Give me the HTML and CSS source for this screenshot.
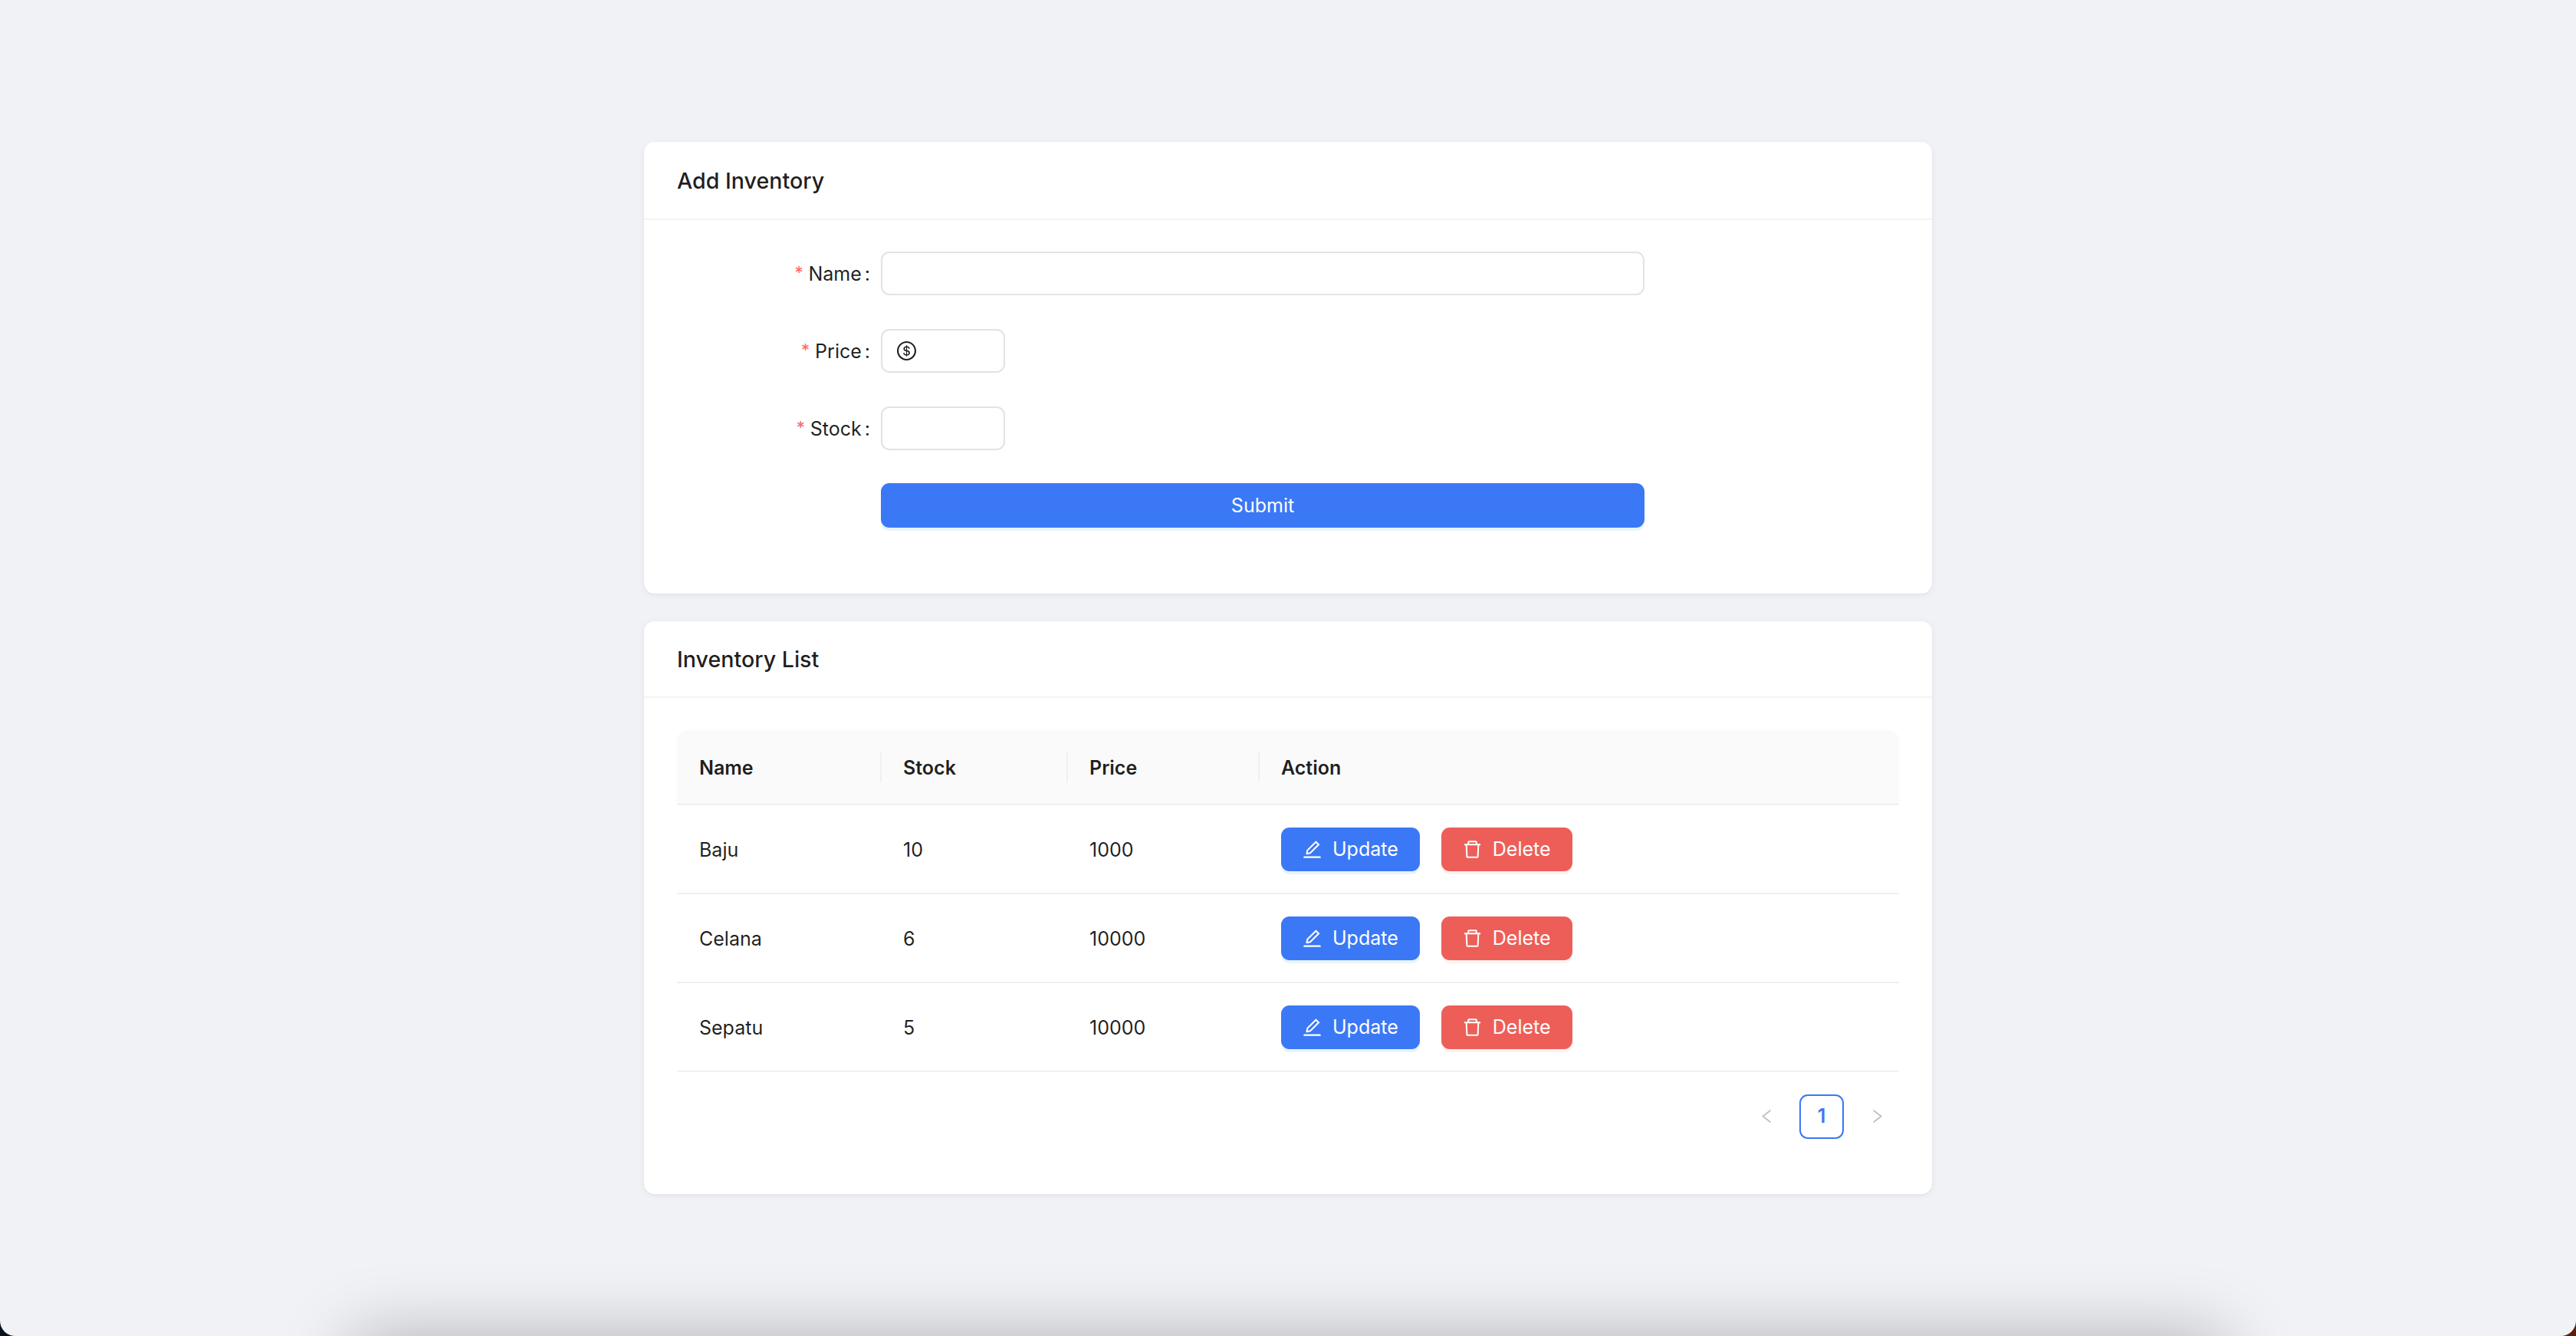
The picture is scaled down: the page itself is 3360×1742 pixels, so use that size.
FILE: index.html
```html
<!DOCTYPE html>
<html lang="en">
<head>
<meta charset="utf-8">
<title>Inventory</title>
<link rel="stylesheet" href="styles.css">
</head>
<body>
<div class="window">
  <main class="page">
    <section class="card">
      <header class="card-head card-head-form">Add Inventory</header>
      <div class="card-body">
        <form class="form">
          <div class="form-row">
            <label class="form-label"><span class="req">*</span>Name<span class="colon">:</span></label>
            <input class="input input-wide" type="text">
          </div>
          <div class="form-row">
            <label class="form-label"><span class="req">*</span>Price<span class="colon">:</span></label>
            <span class="input input-short input-prefixed">
              <svg class="icon" viewBox="64 64 896 896" fill="currentColor"><path d="M512 64C264.6 64 64 264.6 64 512s200.6 448 448 448 448-200.6 448-448S759.4 64 512 64zm0 820c-205.4 0-372-166.6-372-372s166.6-372 372-372 372 166.6 372 372-166.6 372-372 372zm47.7-395.2l-25.4-5.9V348.6c38 5.2 61.5 29 65.5 58.2.5 4 3.9 6.9 7.9 6.9h44.9c4.7 0 8.4-4.1 8-8.8-6.1-62.3-57.4-102.3-125.9-109.2V263c0-4.4-3.6-8-8-8h-28.1c-4.4 0-8 3.6-8 8v33c-70.8 6.9-126.2 46-126.2 119 0 67.6 49.8 100.2 102.1 112.7l24.7 6.3v142.7c-44.2-5.9-69-29.5-74.1-61.3-.6-3.8-4-6.6-7.9-6.6H363c-4.7 0-8.4 4-8 8.7 4.5 55 46.2 105.6 135.2 112.1V761c0 4.4 3.6 8 8 8h28.4c4.4 0 8-3.6 8-8.1l-.2-31.7c78.3-6.9 134.3-48.8 134.3-124-.1-69.4-44.2-100.4-109-116.4zm-68.6-16.2c-5.6-1.6-10.3-3.1-15-5-33.8-12.2-49.5-31.9-49.5-57.3 0-36.3 27.5-57 64.5-61.7v124zM534.3 677V543.3c3.1.9 5.9 1.6 8.8 2.2 47.3 14.4 63.2 34.4 63.2 65.1 0 39.1-29.4 62.6-72 66.4z"/></svg>
            </span>
          </div>
          <div class="form-row">
            <label class="form-label"><span class="req">*</span>Stock<span class="colon">:</span></label>
            <input class="input input-short" type="text">
          </div>
          <div class="form-row form-row-submit">
            <span class="form-label"></span>
            <button class="btn btn-blue btn-submit" type="button"><span>Submit</span></button>
          </div>
        </form>
      </div>
    </section>

    <section class="card">
      <header class="card-head">Inventory List</header>
      <div class="card-body">
        <table class="table">
          <colgroup>
            <col class="col-name"><col class="col-stock"><col class="col-price"><col>
          </colgroup>
          <thead>
            <tr>
              <th>Name</th>
              <th class="has-sep">Stock</th>
              <th class="has-sep">Price</th>
              <th class="has-sep">Action</th>
            </tr>
          </thead>
          <tbody>
            <tr>
              <td>Baju</td><td>10</td><td>1000</td>
              <td><div class="actions">
                <button class="btn btn-blue" type="button"><svg class="icon" viewBox="64 64 896 896" fill="currentColor"><path d="M257.7 752c2 0 4-.2 6-.5L431.9 722c2-.4 3.9-1.3 5.3-2.8l423.9-423.9a9.96 9.96 0 0 0 0-14.1L694.9 114.9c-1.9-1.9-4.4-2.9-7.1-2.9s-5.2 1-7.1 2.9L256.8 538.8c-1.5 1.5-2.4 3.3-2.8 5.3l-29.5 168.2a33.5 33.5 0 0 0 9.4 29.8c6.6 6.4 14.9 9.9 23.8 9.9zm67.4-174.4L687.8 215l73.3 73.3-362.7 362.6-88.9 15.7 15.6-89zM880 836H144c-17.7 0-32 14.3-32 32v36c0 4.4 3.6 8 8 8h784c4.4 0 8-3.6 8-8v-36c0-17.7-14.3-32-32-32z"/></svg><span>Update</span></button>
                <button class="btn btn-red" type="button"><svg class="icon" viewBox="64 64 896 896" fill="currentColor"><path d="M360 184h-8c4.4 0 8-3.6 8-8v8h304v-8c0 4.4 3.6 8 8 8h-8v72h72v-80c0-35.3-28.7-64-64-64H352c-35.3 0-64 28.7-64 64v80h72v-72zm504 72H160c-17.7 0-32 14.3-32 32v32c0 4.4 3.6 8 8 8h60.4l24.7 523c1.6 34.1 29.8 61 63.9 61h454c34.2 0 62.3-26.8 63.9-61l24.7-523H888c4.4 0 8-3.6 8-8v-32c0-17.7-14.3-32-32-32zM731.3 840H292.7l-24.2-512h487l-24.2 512z"/></svg><span>Delete</span></button>
              </div></td>
            </tr>
            <tr>
              <td>Celana</td><td>6</td><td>10000</td>
              <td><div class="actions">
                <button class="btn btn-blue" type="button"><svg class="icon" viewBox="64 64 896 896" fill="currentColor"><path d="M257.7 752c2 0 4-.2 6-.5L431.9 722c2-.4 3.9-1.3 5.3-2.8l423.9-423.9a9.96 9.96 0 0 0 0-14.1L694.9 114.9c-1.9-1.9-4.4-2.9-7.1-2.9s-5.2 1-7.1 2.9L256.8 538.8c-1.5 1.5-2.4 3.3-2.8 5.3l-29.5 168.2a33.5 33.5 0 0 0 9.4 29.8c6.6 6.4 14.9 9.9 23.8 9.9zm67.4-174.4L687.8 215l73.3 73.3-362.7 362.6-88.9 15.7 15.6-89zM880 836H144c-17.7 0-32 14.3-32 32v36c0 4.4 3.6 8 8 8h784c4.4 0 8-3.6 8-8v-36c0-17.7-14.3-32-32-32z"/></svg><span>Update</span></button>
                <button class="btn btn-red" type="button"><svg class="icon" viewBox="64 64 896 896" fill="currentColor"><path d="M360 184h-8c4.4 0 8-3.6 8-8v8h304v-8c0 4.4 3.6 8 8 8h-8v72h72v-80c0-35.3-28.7-64-64-64H352c-35.3 0-64 28.7-64 64v80h72v-72zm504 72H160c-17.7 0-32 14.3-32 32v32c0 4.4 3.6 8 8 8h60.4l24.7 523c1.6 34.1 29.8 61 63.9 61h454c34.2 0 62.3-26.8 63.9-61l24.7-523H888c4.4 0 8-3.6 8-8v-32c0-17.7-14.3-32-32-32zM731.3 840H292.7l-24.2-512h487l-24.2 512z"/></svg><span>Delete</span></button>
              </div></td>
            </tr>
            <tr>
              <td>Sepatu</td><td>5</td><td>10000</td>
              <td><div class="actions">
                <button class="btn btn-blue" type="button"><svg class="icon" viewBox="64 64 896 896" fill="currentColor"><path d="M257.7 752c2 0 4-.2 6-.5L431.9 722c2-.4 3.9-1.3 5.3-2.8l423.9-423.9a9.96 9.96 0 0 0 0-14.1L694.9 114.9c-1.9-1.9-4.4-2.9-7.1-2.9s-5.2 1-7.1 2.9L256.8 538.8c-1.5 1.5-2.4 3.3-2.8 5.3l-29.5 168.2a33.5 33.5 0 0 0 9.4 29.8c6.6 6.4 14.9 9.9 23.8 9.9zm67.4-174.4L687.8 215l73.3 73.3-362.7 362.6-88.9 15.7 15.6-89zM880 836H144c-17.7 0-32 14.3-32 32v36c0 4.4 3.6 8 8 8h784c4.4 0 8-3.6 8-8v-36c0-17.7-14.3-32-32-32z"/></svg><span>Update</span></button>
                <button class="btn btn-red" type="button"><svg class="icon" viewBox="64 64 896 896" fill="currentColor"><path d="M360 184h-8c4.4 0 8-3.6 8-8v8h304v-8c0 4.4 3.6 8 8 8h-8v72h72v-80c0-35.3-28.7-64-64-64H352c-35.3 0-64 28.7-64 64v80h72v-72zm504 72H160c-17.7 0-32 14.3-32 32v32c0 4.4 3.6 8 8 8h60.4l24.7 523c1.6 34.1 29.8 61 63.9 61h454c34.2 0 62.3-26.8 63.9-61l24.7-523H888c4.4 0 8-3.6 8-8v-32c0-17.7-14.3-32-32-32zM731.3 840H292.7l-24.2-512h487l-24.2 512z"/></svg><span>Delete</span></button>
              </div></td>
            </tr>
          </tbody>
        </table>
        <nav class="pagination">
          <span class="page-item page-arrow"><svg class="arrow" viewBox="64 64 896 896" fill="currentColor"><path d="M724 218.3V141c0-6.7-7.7-10.4-12.9-6.3L260.3 486.8a31.86 31.86 0 0 0 0 50.3l450.8 352.1c5.3 4.1 12.9.4 12.9-6.3v-77.3c0-4.9-2.3-9.6-6.1-12.6l-360-281 360-281.1c3.8-3 6.1-7.7 6.1-12.6z"/></svg></span>
          <span class="page-item page-current">1</span>
          <span class="page-item page-arrow"><svg class="arrow" viewBox="64 64 896 896" fill="currentColor"><path d="M765.7 486.8L314.9 134.7A7.97 7.97 0 0 0 302 141v77.3c0 4.9 2.3 9.6 6.1 12.6l360 281.1-360 281.1c-3.9 3-6.1 7.7-6.1 12.6V883c0 6.7 7.7 10.4 12.9 6.3l450.8-352.1a31.96 31.96 0 0 0 0-50.4z"/></svg></span>
        </nav>
      </div>
    </section>
  </main>
  <div class="dock-shadow"></div>
</div>
</body>
</html>
```

FILE: styles.css
```css
* { box-sizing: border-box; }

html {
  margin: 0;
  height: 100%;
  background: linear-gradient(90deg, #06121c 0 50%, #5c1e0c 50% 100%);
}

body {
  margin: 0;
  font-family: "Inter", "Liberation Sans", sans-serif;
  font-size: 25px;
  line-height: 1.5714;
  color: rgba(0, 0, 0, 0.88);
}

.window {
  position: relative;
  width: 3360px;
  height: 1742px;
  overflow: hidden;
  background: #f0f2f6;
  border-radius: 0 0 20px 20px;
}

.page {
  display: flex;
  flex-direction: column;
  align-items: center;
  gap: 36px;
  padding-top: 185px;
}

.card {
  width: 1680px;
  background: #fff;
  border-radius: 14px;
  box-shadow: 0 2px 4px rgba(0, 0, 0, 0.02), 0 2px 10px 2px rgba(0, 0, 0, 0.03), 0 1px 3px rgba(0, 0, 0, 0.03);
}

.card-head {
  display: flex;
  align-items: center;
  height: 100px;
  padding: 2px 43px 0;
  font-size: 28.6px;
  font-weight: 500;
  border-bottom: 2px solid #f3f3f3;
}

.card-head-form { height: 102px; }

.card-body { padding: 43px; }

/* form */
.form {
  display: flex;
  flex-direction: column;
  gap: 44px;
  margin-top: -2px;
  padding-bottom: 43px;
}

.form-row { display: flex; align-items: center; }
.form-row-submit { margin-top: -1px; }

.form-label {
  display: flex;
  justify-content: flex-end;
  align-items: center;
  flex: 0 0 266px;
  padding-top: 2px;
}

.req {
  margin: -6px 7px 0 0;
  color: #ff6464;
  font-size: 22px;
  line-height: 1;
}

.colon { margin: 0 14px 0 4px; }

.input {
  display: block;
  height: 57px;
  padding: 0 19px;
  background: #fff;
  border: 2px solid #e3e3e3;
  border-radius: 11px;
  font: inherit;
  outline: none;
}

.input-wide { width: 996px; }
.input-short { width: 162px; }
.input-prefixed { display: flex; align-items: center; }

.icon { width: 25px; height: 25px; flex: none; }

/* buttons */
.btn {
  display: inline-flex;
  align-items: center;
  justify-content: center;
  gap: 14px;
  height: 57px;
  padding: 0 26px;
  border: 2px solid transparent;
  border-radius: 11px;
  color: #fff;
  font: inherit;
  cursor: pointer;
}

.btn span { padding-top: 2px; }

.btn-blue { background: #3b78f6; box-shadow: 0 4px 0 rgba(5, 145, 255, 0.1); }
.btn-red { background: #ee5e58; box-shadow: 0 4px 0 rgba(255, 38, 5, 0.06); }
.btn-submit { width: 996px; height: 58px; }

/* table */
.table {
  width: 100%;
  margin-top: -1px;
  border-collapse: separate;
  border-spacing: 0;
  table-layout: fixed;
}

.col-name { width: 266px; }
.col-stock { width: 243px; }
.col-price { width: 250px; }

.table th,
.table td {
  padding: 3px 29px 0;
  text-align: left;
}

.table th {
  position: relative;
  height: 98px;
  background: #fafafa;
  font-weight: 600;
  border-bottom: 2px solid #f0f0f0;
}

.table th:first-child { border-top-left-radius: 14px; }
.table th:last-child { border-top-right-radius: 14px; }

.has-sep::before {
  content: "";
  position: absolute;
  left: -1px;
  top: 50%;
  width: 2px;
  height: 40px;
  transform: translateY(-50%);
  background: #f0f0f0;
}

.table td {
  height: 116px;
  border-bottom: 2px solid #f0f0f0;
}

.table td:last-child { padding-top: 0; }

.actions { display: flex; gap: 28px; }

/* pagination */
.pagination {
  display: flex;
  justify-content: flex-end;
  gap: 14px;
  margin-top: 29px;
  padding-bottom: 29px;
}

.page-item {
  display: flex;
  align-items: center;
  justify-content: center;
  width: 58px;
  height: 58px;
  border-radius: 11px;
}

.page-arrow { color: rgba(0, 0, 0, 0.25); }
.arrow { width: 21px; height: 21px; margin-top: -2px; }

.page-current {
  border: 2px solid #3b78f6;
  color: #3b78f6;
  font-weight: 600;
}

/* shadow of the dock peeking in along the bottom edge */
.dock-shadow {
  position: absolute;
  left: 460px;
  right: 460px;
  top: 1742px;
  height: 200px;
  box-shadow: 0 0 90px rgba(0, 0, 0, 0.27);
}
```
